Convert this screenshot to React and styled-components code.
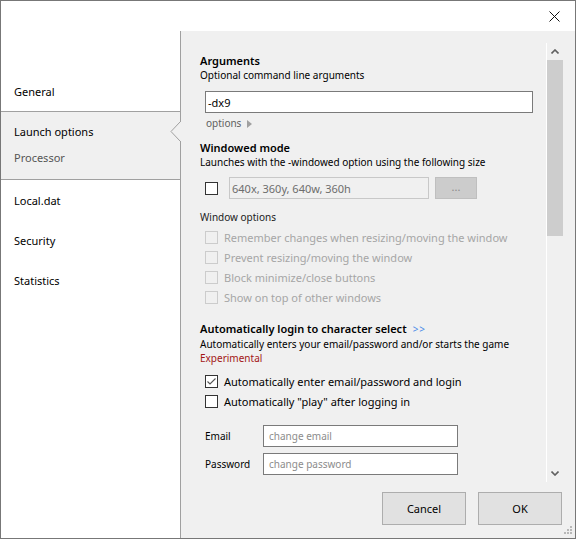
import React from 'react';
import styled, { createGlobalStyle } from 'styled-components';

const GlobalStyle = createGlobalStyle`
  html, body { margin: 0; padding: 0; background: #2a2a2a; }
  body {
    font-family: "Noto Sans", "Liberation Sans", sans-serif;
    font-size: 11px;
    color: #000;
  }
  * { box-sizing: border-box; }
`;

const Window = styled.div`
  width: 576px;
  height: 539px;
  border: 1px solid #777;
  background: #f0f0f0;
  display: grid;
  grid-template-columns: 180px 1fr;
  grid-template-rows: 30px 1fr;
  position: relative;
  overflow: hidden;
`;

const TitleBar = styled.div`
  grid-column: 1 / -1;
  background: #fff;
  display: flex;
  justify-content: flex-end;
  align-items: center;
`;

const CloseButton = styled.div`
  width: 42px;
  height: 30px;
  display: flex;
  align-items: center;
  justify-content: center;
`;

const Sidebar = styled.nav`
  background: #fff;
  border-right: 1px solid #a0a0a0;
  display: flex;
  flex-direction: column;
  padding-top: 41px;
`;

const NavItem = styled.div`
  height: ${p => p.$h || 40}px;
  flex-shrink: 0;
  padding-left: 13px;
  display: flex;
  align-items: center;
  line-height: 20px;
  color: #000;
  border-bottom: ${p => (p.$sep ? '1px solid #a0a0a0' : 'none')};
`;

const NavGroup = styled.div`
  position: relative;
  flex-shrink: 0;
  background: #f0f0f0;
  border-bottom: 1px solid #a0a0a0;
  padding: 10px 0 11px 13px;
  margin-bottom: 1px;
  display: flex;
  flex-direction: column;
  gap: 6px;
  line-height: 20px;
`;

const SubItem = styled.div`
  color: ${p => (p.$sub ? '#555' : '#000')};
  height: 20px;
`;

const Notch = styled.svg`
  position: absolute;
  right: -1px;
  top: 10px;
`;

const Main = styled.main`
  display: flex;
  flex-direction: column;
  min-height: 0;
`;

const ScrollPanel = styled.div`
  margin: 12px 12px 0 0;
  height: 439px;
  flex-shrink: 0;
  display: flex;
`;

const Content = styled.div`
  flex: 1;
  padding: 11px 0 0 19px;
  overflow: hidden;
`;

const Heading = styled.div`
  font-weight: 600;
  line-height: 14px;
  margin-top: ${p => p.$mt || 0}px;
  display: flex;
  align-items: baseline;
  gap: 6px;
  white-space: nowrap;
`;

const Text = styled.div`
  font-size: 10px;
  line-height: 14px;
  margin-top: ${p => p.$mt || 0}px;
  color: ${p => p.$color || '#000'};
  white-space: nowrap;
`;

const Arrows = styled.span`
  color: #4a8ae8;
  font-weight: 400;
  font-size: 10px;
  letter-spacing: 1px;
`;

const TextInput = styled.div`
  width: ${p => p.$w}px;
  height: 22px;
  border: 1px solid ${p => (p.$disabled ? '#c8c8c8' : '#7a7a7a')};
  background: ${p => (p.$disabled ? '#f0f0f0' : '#fff')};
  color: ${p => (p.$placeholder ? '#8c8c8c' : p.$disabled ? '#6d6d6d' : '#000')};
  font-size: ${p => (p.$placeholder ? 10 : 11)}px;
  padding: 0 ${p => p.$pad || 2}px;
  display: flex;
  align-items: center;
  margin-left: ${p => p.$ml || 0}px;
  margin-top: ${p => p.$mt || 0}px;
  flex-shrink: 0;
`;

const OptionsLink = styled.div`
  margin: 3px 0 0 6px;
  font-size: 10px;
  line-height: 14px;
  color: #606060;
  display: flex;
  align-items: center;
  gap: 6px;
`;

const Triangle = styled.span`
  width: 0;
  height: 0;
  border-top: 4.5px solid transparent;
  border-bottom: 4.5px solid transparent;
  border-left: 5px solid #a0a0a0;
  margin-top: 1px;
`;

const Row = styled.div`
  display: flex;
  align-items: center;
  height: ${p => p.$h || 22}px;
  margin-top: ${p => p.$mt || 0}px;
  padding-left: 5px;
`;

const Box = styled.span`
  width: 13px;
  height: 13px;
  border: 1px solid ${p => (p.$disabled ? '#cccccc' : '#333')};
  background: ${p => (p.$disabled ? '#f0f0f0' : '#fff')};
  display: flex;
  align-items: center;
  justify-content: center;
  flex-shrink: 0;
`;

const CheckLabel = styled.span`
  margin-left: 6px;
  color: ${p => (p.$disabled ? '#a6a6a6' : '#000')};
  white-space: nowrap;
`;

const SmallButton = styled.div`
  width: 42px;
  height: 22px;
  margin-left: 6px;
  background: #cccccc;
  border: 1px solid #bfbfbf;
  color: #8a8a8a;
  display: flex;
  align-items: center;
  justify-content: center;
  font-size: 11px;
  padding-bottom: 4px;
`;

const FieldLabel = styled.span`
  width: 58px;
  font-size: 10px;
  flex-shrink: 0;
`;

const Scrollbar = styled.div`
  width: 17px;
  border-left: 1px solid #fff;
  display: flex;
  flex-direction: column;
`;

const ScrollArrow = styled.div`
  height: 17px;
  display: flex;
  align-items: center;
  justify-content: center;
`;

const Thumb = styled.div`
  height: 176px;
  background: #cdcdcd;
`;

const Track = styled.div`
  flex: 1;
`;

const Footer = styled.div`
  flex: 1;
  display: flex;
  justify-content: flex-end;
  align-items: flex-start;
  gap: 12px;
  padding: 10px 13px 0 0;
`;

const Button = styled.div`
  width: 84px;
  height: 33px;
  background: #e1e1e1;
  border: 1px solid #adadad;
  display: flex;
  align-items: center;
  justify-content: center;
  color: #000;
`;

const Gripper = styled.svg`
  position: absolute;
  right: 2px;
  bottom: 3px;
`;

function Check({ checked, disabled }) {
  return (
    <Box $disabled={disabled}>
      {checked && (
        <svg width="11" height="11" viewBox="0 0 11 11">
          <polyline points="1.5,5.5 4,8 9.5,2.5" fill="none" stroke="#555" strokeWidth="1.1" />
        </svg>
      )}
    </Box>
  );
}

export default function App() {
  return (
    <>
      <GlobalStyle />
      <Window>
        <TitleBar>
          <CloseButton>
            <svg width="11" height="11" viewBox="0 0 11 11">
              <path d="M0.5 0.5 L10.5 10.5 M10.5 0.5 L0.5 10.5" stroke="#111" strokeWidth="1" />
            </svg>
          </CloseButton>
        </TitleBar>
        <Sidebar>
          <NavItem $h={40} $sep>General</NavItem>
          <NavGroup>
            <SubItem>Launch options</SubItem>
            <SubItem $sub>Processor</SubItem>
            <Notch width="11" height="19" viewBox="0 0 11 19">
              <polygon points="10,0 1,9.5 10,19 11,19 11,0" fill="#f0f0f0" />
              <polyline points="10,0 1,9.5 10,19" fill="none" stroke="#a0a0a0" strokeWidth="1" />
            </Notch>
          </NavGroup>
          <NavItem>Local.dat</NavItem>
          <NavItem>Security</NavItem>
          <NavItem>Statistics</NavItem>
        </Sidebar>
        <Main>
          <ScrollPanel>
            <Content>
              <Heading>Arguments</Heading>
              <Text>Optional command line arguments</Text>
              <TextInput $w={328} $ml={5} $mt={9}>-dx9</TextInput>
              <OptionsLink>options <Triangle /></OptionsLink>

              <Heading $mt={11}>Windowed mode</Heading>
              <Text>Launches with the -windowed option using the following size</Text>
              <Row $mt={8}>
                <Check />
                <TextInput $w={200} $ml={11} $disabled>640x, 360y, 640w, 360h</TextInput>
                <SmallButton>...</SmallButton>
              </Row>
              <Text $mt={11} $color="#222">Window options</Text>
              <Row $h={20} $mt={3}>
                <Check disabled />
                <CheckLabel $disabled>Remember changes when resizing/moving the window</CheckLabel>
              </Row>
              <Row $h={20}>
                <Check disabled />
                <CheckLabel $disabled>Prevent resizing/moving the window</CheckLabel>
              </Row>
              <Row $h={20}>
                <Check disabled />
                <CheckLabel $disabled>Block minimize/close buttons</CheckLabel>
              </Row>
              <Row $h={20}>
                <Check disabled />
                <CheckLabel $disabled>Show on top of other windows</CheckLabel>
              </Row>

              <Heading $mt={15}>
                Automatically login to character select <Arrows>&gt;&gt;</Arrows>
              </Heading>
              <Text $mt={1}>Automatically enters your email/password and/or starts the game</Text>
              <Text $color="#a31515">Experimental</Text>
              <Row $h={20} $mt={6}>
                <Check checked />
                <CheckLabel>Automatically enter email/password and login</CheckLabel>
              </Row>
              <Row $h={20}>
                <Check />
                <CheckLabel>Automatically "play" after logging in</CheckLabel>
              </Row>
              <Row $mt={14}>
                <FieldLabel>Email</FieldLabel>
                <TextInput $w={195} $pad={5} $placeholder>change email</TextInput>
              </Row>
              <Row $mt={6}>
                <FieldLabel>Password</FieldLabel>
                <TextInput $w={195} $pad={5} $placeholder>change password</TextInput>
              </Row>
            </Content>
            <Scrollbar>
              <ScrollArrow>
                <svg width="8" height="5" viewBox="0 0 8 5">
                  <polyline points="0.5,4.5 4,1 7.5,4.5" fill="none" stroke="#606060" strokeWidth="1.6" />
                </svg>
              </ScrollArrow>
              <Thumb />
              <Track />
              <ScrollArrow>
                <svg width="8" height="5" viewBox="0 0 8 5">
                  <polyline points="0.5,0.5 4,4 7.5,0.5" fill="none" stroke="#606060" strokeWidth="1.6" />
                </svg>
              </ScrollArrow>
            </Scrollbar>
          </ScrollPanel>
          <Footer>
            <Button>Cancel</Button>
            <Button>OK</Button>
          </Footer>
        </Main>
        <Gripper width="9" height="9" viewBox="0 0 9 9">
          <rect x="6" y="0" width="2" height="2" fill="#b8b8b8" />
          <rect x="3" y="3" width="2" height="2" fill="#b8b8b8" />
          <rect x="6" y="3" width="2" height="2" fill="#b8b8b8" />
          <rect x="0" y="6" width="2" height="2" fill="#b8b8b8" />
          <rect x="3" y="6" width="2" height="2" fill="#b8b8b8" />
          <rect x="6" y="6" width="2" height="2" fill="#b8b8b8" />
        </Gripper>
      </Window>
    </>
  );
}
